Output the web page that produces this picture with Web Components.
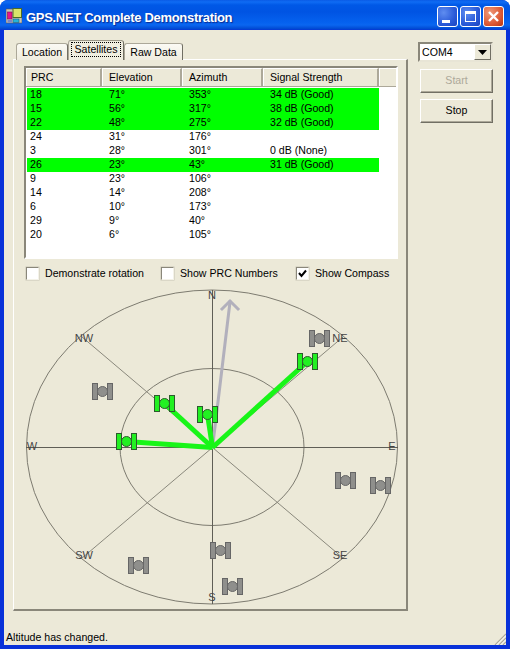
<!DOCTYPE html>
<html>
<head>
<meta charset="utf-8">
<title>GPS.NET Complete Demonstration</title>
<style>
  html, body { margin: 0; padding: 0; background: #fff; }
  body { font: 10.6px "Liberation Sans", "Noto Sans", sans-serif; color: #000; }
</style>
</head>
<body>
<xp-window caption="GPS.NET Complete Demonstration" status="Altitude has changed.">
  <xp-tabs>
    <sat-list></sat-list>
    <check-row></check-row>
    <compass-view></compass-view>
  </xp-tabs>
  <side-panel slot="side"></side-panel>
</xp-window>

<script>
const FONT = '"Liberation Sans", "Noto Sans", sans-serif';

class XpWindow extends HTMLElement {
    constructor() {
        super();
        this.attachShadow({ mode: "open" });
    }
    connectedCallback() {
        this.shadowRoot.innerHTML = `
        <style>
        :host { display: flex; flex-direction: column; width: 510px; height: 649px; box-sizing: border-box;
                border-radius: 8px 8px 0 0; overflow: hidden; background: #0831d9; }
        #bar { display: flex; align-items: center; height: 30px; flex: none; box-sizing: border-box; padding: 2px 6px 0 6px;
               background: linear-gradient(#0a5be6 0, #0f6cf4 2px, #0058e6 5px, #0054e3 12px, #0561ee 22px, #0a66f0 25px, #0048d0 29px, #0831d9 30px); }
        #bar svg { flex: none; }
        #title { flex: 1; margin: 2px 0 0 4px; color: #fff; font: bold 13px "Liberation Sans", sans-serif; letter-spacing: -.3px;
                 text-shadow: 1px 1px 1px #0a2a90; white-space: nowrap; }
        .cap { flex: none; width: 21px; height: 21px; margin-left: 2px; box-sizing: border-box; border: 1px solid #fff; border-radius: 3px;
               background: radial-gradient(circle at 30% 30%, #5f8df0, #2a5ad8 60%, #1a44c0); position: relative; }
        .cap.close { background: radial-gradient(circle at 30% 30%, #ef9a7a, #dd5a35 60%, #b8340f); }
        .cap svg { display: block; }
        #client { flex: 1; display: flex; flex-direction: column; margin: 0 4px 4px; background: #ece9d8; min-height: 0; }
        #main { display: flex; gap: 10px; padding: 10px 0 0 9px; height: 576px; box-sizing: border-box; flex: none; }
        #foot { flex: 1; display: flex; align-items: flex-end; justify-content: space-between; padding: 0 0 1px 2px; line-height: 14px; }
        #grip { width: 12px; height: 12px; flex: none; margin: 0 0 -1px 0; }
        </style>
        <div id="bar">
          <svg width="16" height="16" viewBox="0 0 16 16">
            <rect x="0" y="1" width="16" height="14" fill="#c9c5b4" stroke="#555" stroke-width=".6"/>
            <rect x="7" y="0.5" width="8.5" height="9" fill="#d8e46a" stroke="#4d6a2a"/>
            <rect x="1.5" y="4" width="4.5" height="7" fill="#e8128a" stroke="#7a1050" stroke-width=".6"/>
            <rect x="7" y="11" width="6" height="3.5" fill="#25b4d8" stroke="#1a5a80" stroke-width=".6"/>
            <rect x="1.5" y="12" width="4.5" height="2.5" fill="#7b86c8"/>
          </svg>
          <span id="title">${this.getAttribute("caption")}</span>
          <div class="cap"><svg width="19" height="19"><rect x="4" y="13" width="8" height="3" fill="#fff"/></svg></div>
          <div class="cap"><svg width="19" height="19"><rect x="4.5" y="4.5" width="10" height="10" fill="none" stroke="#fff"/><rect x="4" y="4" width="11" height="3" fill="#fff"/></svg></div>
          <div class="cap close"><svg width="19" height="19"><path d="M5 5 L14 14 M14 5 L5 14" stroke="#fff" stroke-width="2.4"/></svg></div>
        </div>
        <div id="client">
          <div id="main"><slot></slot><slot name="side"></slot></div>
          <div id="foot"><span>${this.getAttribute("status")}</span>
            <svg id="grip" viewBox="0 0 12 12"><path d="M1 12 L12 1 M5 12 L12 5 M9 12 L12 9" stroke="#aca899" stroke-width="1.2"/><path d="M2.5 12 L12 2.5 M6.5 12 L12 6.5 M10.5 12 L12 10.5" stroke="#fff" stroke-width=".8"/></svg>
          </div>
        </div>`;
    }
}

class XpTabs extends HTMLElement {
    constructor() {
        super();
        this.attachShadow({ mode: "open" });
    }
    connectedCallback() {
        this.shadowRoot.innerHTML = `
        <style>
        :host { display: flex; flex-direction: column; width: 395px; flex: none; }
        #strip { display: flex; align-items: flex-end; height: 20px; padding-left: 3px; position: relative; z-index: 1; margin-bottom: -1px; }
        .tab { box-sizing: border-box; height: 17px; line-height: 16px; text-align: center; background: linear-gradient(#fbfaf4, #efecdf);
               border: 1px solid #aca899; border-bottom: 0; border-right-color: #716f64; border-radius: 3px 3px 0 0; }
        .tab.on { height: 20px; background: #f0eee0; line-height: 17px; padding: 1px 2px 0; border-top-color: #9a9788; }
        .tab.on span { display: block; border: 1px dotted #000; line-height: 13px; }
        #page { flex: 1; box-sizing: border-box; display: flex; flex-direction: column; background: #ece9d8;
                border: 1px solid #fff; border-right: 2px solid #8a877a; border-bottom: 2px solid #8a877a; padding: 6px 9px 0 10px; }
        </style>
        <div id="strip">
          <div class="tab" style="width:52px">Location</div>
          <div class="tab on" style="width:56px"><span>Satellites</span></div>
          <div class="tab" style="width:59px">Raw Data</div>
        </div>
        <div id="page"><slot></slot></div>`;
    }
}

const SATS = [
    ["18", "71°", "353°", "34 dB (Good)", 1], ["15", "56°", "317°", "38 dB (Good)", 1], ["22", "48°", "275°", "32 dB (Good)", 1],
    ["24", "31°", "176°", "", 0], ["3", "28°", "301°", "0 dB (None)", 0], ["26", "23°", "43°", "31 dB (Good)", 1],
    ["9", "23°", "106°", "", 0], ["14", "14°", "208°", "", 0], ["6", "10°", "173°", "", 0],
    ["29", "9°", "40°", "", 0], ["20", "6°", "105°", "", 0]
];

class SatList extends HTMLElement {
    constructor() {
        super();
        this.attachShadow({ mode: "open" });
    }
    connectedCallback() {
        const cols = "76px 80px 81px 116px";
        const rows = SATS.map(r => `<div class="row ${r[4] ? "good" : ""}"><span>${r[0]}</span><span>${r[1]}</span><span>${r[2]}</span><span>${r[3]}</span></div>`).join("");
        this.shadowRoot.innerHTML = `
        <style>
        :host { display: block; height: 193px; width: 374px; box-sizing: border-box; background: #fff;
                border: 2px solid; border-color: #8a877a #fff #fff #8a877a; }
        #head { display: grid; grid-template-columns: ${cols} 1fr; height: 18px; background: #ece9d8; }
        #head span { box-sizing: border-box; padding-left: 7px; line-height: 17px; border-right: 2px solid #aca899; border-bottom: 1px solid #aca899; border-top: 1px solid #fff; box-shadow: inset 1px 0 #fff; }
        #head span:first-child { padding-left: 5px; }
        #head span:last-child { border-right: 0; }
        #body { padding: 2px 0 0 1px; }
        .row { display: grid; grid-template-columns: 79px 80px 81px 112px; width: 352px; height: 14px; line-height: 12px; }
        .row span { padding-left: 3px; white-space: nowrap; }
        .good { background: #00ff00; }
        </style>
        <div id="head"><span>PRC</span><span>Elevation</span><span>Azimuth</span><span>Signal Strength</span><span></span></div>
        <div id="body">${rows}</div>`;
    }
}

class XpCheck extends HTMLElement {
    constructor() {
        super();
        this.attachShadow({ mode: "open" });
    }
    connectedCallback() {
        const on = this.hasAttribute("checked");
        this.shadowRoot.innerHTML = `
        <style>
        :host { display: flex; align-items: center; gap: 6px; width: 135px; flex: none; white-space: nowrap; }
        #box { width: 13px; height: 13px; box-sizing: border-box; background: #fff; border: 1px solid; border-color: #8a877a #f4f2e8 #f4f2e8 #8a877a; box-shadow: 0 0 0 .5px #c8c5b5; flex: none; }
        svg { display: block; }
        </style>
        <div id="box">${on ? '<svg width="11" height="11"><path d="M2 5 L4.5 8 L9 2.5" fill="none" stroke="#000" stroke-width="2"/></svg>' : ""}</div>
        <span><slot></slot></span>`;
    }
}

class CheckRow extends HTMLElement {
    constructor() {
        super();
        this.attachShadow({ mode: "open" });
    }
    connectedCallback() {
        this.shadowRoot.innerHTML = `
        <style>
        :host { display: flex; height: 13px; margin: 8px 0 0 2px; line-height: 13px; }
        </style>
        <xp-check>Demonstrate rotation</xp-check>
        <xp-check>Show PRC Numbers</xp-check>
        <xp-check checked>Show Compass</xp-check>`;
    }
}

const GREEN = [[307.5, 361.5], [164.5, 403.5], [207.5, 414.5], [126.5, 441.5]];
const GRAY = [[319.5, 338.5], [102.5, 391.5], [345.5, 480.5], [380.5, 485.5], [220.5, 550.5], [138.5, 565.5], [232.5, 586.5]];

function sat(x, y, fill, edge) {
    return `<g stroke="${edge}" stroke-width="1" fill="${fill}">
      <rect x="${x - 10}" y="${y - 8}" width="5" height="16"/><rect x="${x + 5}" y="${y - 8}" width="5" height="16"/>
      <line x1="${x - 5}" y1="${y}" x2="${x + 5}" y2="${y}"/><circle cx="${x}" cy="${y}" r="5"/></g>`;
}

class CompassView extends HTMLElement {
    constructor() {
        super();
        this.attachShadow({ mode: "open" });
    }
    connectedCallback() {
        const cx = 212.5, cy = 447.5;
        const spokes = GREEN.map(p => `<line x1="${cx}" y1="${cy}" x2="${p[0]}" y2="${p[1]}"/>`).join("");
        const labels = [["N", 212, 299], ["NE", 340, 342], ["E", 392, 450], ["SE", 340, 559], ["S", 212, 601], ["SW", 84, 559], ["W", 32, 450], ["NW", 84, 342]]
            .map(l => `<text x="${l[1]}" y="${l[2]}">${l[0]}</text>`).join("");
        this.shadowRoot.innerHTML = `
        <style>
        :host { display: block; margin: 4px 0 0 -9px; width: 392px; height: 325px; }
        svg { display: block; }
        text { font: 11px ${FONT}; fill: #444; text-anchor: middle; }
        </style>
        <svg width="392" height="325" viewBox="15 284 392 325">
          <g fill="none" stroke="#7d7b70" stroke-width="1">
            <ellipse cx="212" cy="447" rx="185.5" ry="157"/>
            <ellipse cx="212" cy="447" rx="92" ry="78.5"/>
            <line x1="${cx - 131}" y1="${cy - 111}" x2="${cx + 131}" y2="${cy + 111}" stroke="#8a887c"/>
            <line x1="${cx + 131}" y1="${cy - 111}" x2="${cx - 131}" y2="${cy + 111}" stroke="#8a887c"/>
            <line x1="${cx}" y1="290" x2="${cx}" y2="604" stroke="#5f5e56"/>
            <line x1="26" y1="${cy}" x2="398" y2="${cy}" stroke="#5f5e56"/>
          </g>
          ${labels}
          <g stroke="#b2b0bc" stroke-width="3" fill="none" stroke-linecap="square">
            <path d="M${cx} ${cy} L230 302"/><path d="M222 309 L230 301 L238 309"/>
          </g>
          <g stroke="#18f518" stroke-width="5">${spokes}</g>
          ${GRAY.map(p => sat(p[0], p[1], "#8f8f8c", "#666")).join("")}
          ${GREEN.map(p => sat(p[0], p[1], "#22f022", "#2d5a2d")).join("")}
        </svg>`;
    }
}

class XpButton extends HTMLElement {
    constructor() {
        super();
        this.attachShadow({ mode: "open" });
    }
    connectedCallback() {
        const off = this.hasAttribute("disabled");
        this.shadowRoot.innerHTML = `
        <style>
        :host { display: block; width: 73px; height: 24px; box-sizing: border-box; text-align: center; line-height: 21px;
                background: #ece9d8; color: ${off ? "#aca899" : "#000"};
                border: 1px solid; border-color: #fff #716f64 #716f64 #fff; box-shadow: inset -1px -1px #aca899; }
        </style><slot></slot>`;
    }
}

class SidePanel extends HTMLElement {
    constructor() {
        super();
        this.attachShadow({ mode: "open" });
    }
    connectedCallback() {
        this.shadowRoot.innerHTML = `
        <style>
        :host { display: flex; flex-direction: column; align-items: flex-end; width: 75px; padding-top: 2px; gap: 6px; }
        #combo { display: flex; align-items: center; justify-content: space-between; width: 75px; height: 20px; box-sizing: border-box; margin-bottom: 1px;
                 background: #fff; border: 2px solid; border-color: #8a877a #e8e5d6 #e8e5d6 #8a877a; padding-left: 2px; }
        #drop { width: 17px; height: 16px; box-sizing: border-box; background: #ece9d8; border: 1px solid; border-color: #fff #716f64 #716f64 #fff; display: flex; align-items: center; justify-content: center; }
        </style>
        <div id="combo"><span>COM4</span><div id="drop"><svg width="9" height="5"><path d="M0 0 H9 L4.5 5 Z" fill="#000"/></svg></div></div>
        <xp-button disabled>Start</xp-button>
        <xp-button>Stop</xp-button>`;
    }
}

customElements.define("xp-window", XpWindow);
customElements.define("xp-tabs", XpTabs);
customElements.define("sat-list", SatList);
customElements.define("xp-check", XpCheck);
customElements.define("check-row", CheckRow);
customElements.define("compass-view", CompassView);
customElements.define("xp-button", XpButton);
customElements.define("side-panel", SidePanel);
</script>
</body>
</html>
